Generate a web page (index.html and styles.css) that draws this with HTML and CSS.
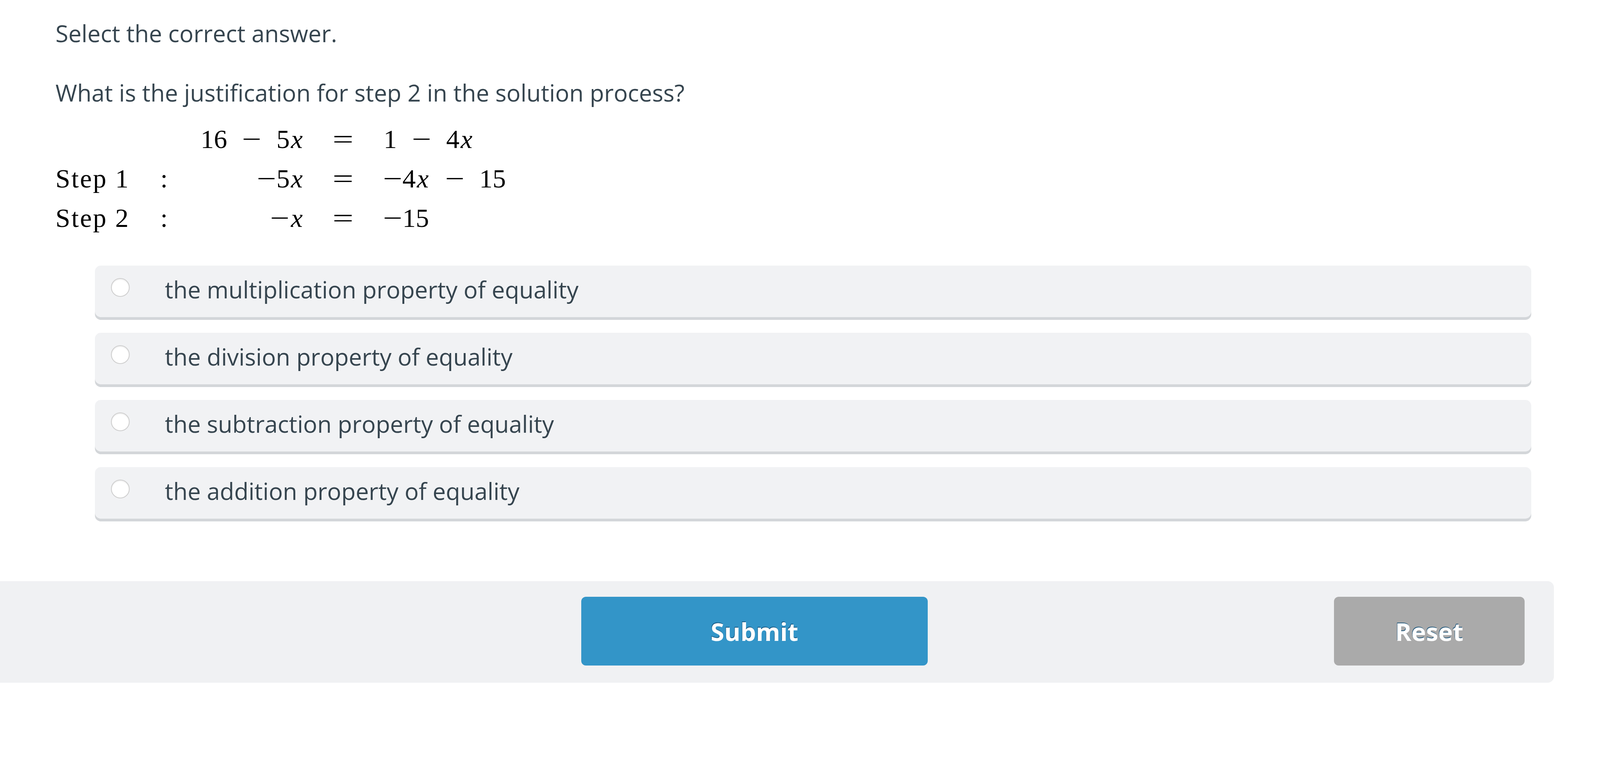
FILE: index.html
```html
<!DOCTYPE html>
<html lang="en">
<head>
<meta charset="utf-8">
<title>Select the correct answer</title>
<link rel="stylesheet" href="styles.css">
</head>
<body>
<main class="question">
  <p class="instr">Select the correct answer.</p>
  <p class="prompt">What is the justification for step 2 in the solution process?</p>
  <div class="math">
    <span class="lbl"></span><span class="col"></span>
    <span class="lhs">16<span class="bin">−</span>5<i class="v">x</i></span>
    <span class="eq"><span class="eqs">=</span></span>
    <span class="rhs">1<span class="bin">−</span>4<i class="v">x</i></span>

    <span class="lbl">Step 1</span><span class="col">:</span>
    <span class="lhs"><span class="neg">−</span>5<i class="v">x</i></span>
    <span class="eq"><span class="eqs">=</span></span>
    <span class="rhs"><span class="neg">−</span>4<i class="v">x</i><span class="bin">−</span>15</span>

    <span class="lbl">Step 2</span><span class="col">:</span>
    <span class="lhs"><span class="neg">−</span><i class="v">x</i></span>
    <span class="eq"><span class="eqs">=</span></span>
    <span class="rhs"><span class="neg">−</span>15</span>
  </div>
  <ul class="options">
    <li class="option"><input class="radio" type="radio" name="ans"><span class="label">the multiplication property of equality</span></li>
    <li class="option"><input class="radio" type="radio" name="ans"><span class="label">the division property of equality</span></li>
    <li class="option"><input class="radio" type="radio" name="ans"><span class="label">the subtraction property of equality</span></li>
    <li class="option"><input class="radio" type="radio" name="ans"><span class="label">the addition property of equality</span></li>
  </ul>
</main>
<div class="footer">
  <button class="btn submit" type="button">Submit</button>
  <button class="btn reset" type="button">Reset</button>
</div>
</body>
</html>
```
FILE: styles.css
```css
html, body {
  margin: 0;
  padding: 0;
  background: #ffffff;
}
body {
  font-family: "Open Sans", "Liberation Sans", sans-serif;
  color: #36454f;
  overflow: hidden;
}
.question {
  padding: 43px 0 0 142px;
}
.instr,
.prompt {
  margin: 0;
  font-size: 60px;
  line-height: 84px;
}
.prompt {
  margin-top: 68px;
}
.math {
  margin-top: 27px;
  display: grid;
  grid-template-columns: 250px 56px 330px 200px 400px;
  grid-auto-rows: 101px;
  line-height: 101px;
  font-family: "Liberation Serif", "Times New Roman", serif;
  font-size: 68px;
  color: #000;
  white-space: nowrap;
}
.lbl {
  letter-spacing: 3px;
}
.col {
  text-align: center;
}
.lhs {
  text-align: right;
}
.eq {
  text-align: center;
}
.eqs {
  display: inline-block;
  transform: scaleX(1.4);
}
.rhs {
  text-align: left;
  padding-left: 4px;
}
.bin {
  display: inline-block;
  margin: 0 44px;
  transform: scaleX(1.3);
}
.neg {
  display: inline-block;
  margin: 0 6px 0 4px;
  transform: scaleX(1.3);
}
.v {
  font-style: italic;
  padding: 0 3px;
}
.options {
  list-style: none;
  margin: 71px 0 0 101px;
  padding: 0;
  width: 3677px;
  display: flex;
  flex-direction: column;
  gap: 40px;
}
.option {
  display: flex;
  align-items: flex-start;
  height: 132px;
  box-sizing: border-box;
  padding: 19px 41px 0;
  background: #f1f2f4;
  border-radius: 15px;
  box-shadow: 0 7px 0 #d3d6d9;
  font-size: 60px;
  line-height: 84px;
}
.radio {
  appearance: none;
  -webkit-appearance: none;
  flex: none;
  width: 48px;
  height: 48px;
  margin: 13px 0 0 0;
  box-sizing: border-box;
  border-radius: 50%;
  border: 2px solid #cdcdcd;
  background: #ffffff;
  box-shadow: inset 0 2px 3px rgba(0, 0, 0, 0.07);
}
.label {
  margin-left: 90px;
}
.footer {
  display: flex;
  align-items: flex-start;
  width: 3978px;
  height: 260px;
  margin-top: 160px;
  padding: 40px 75px 0 0;
  box-sizing: border-box;
  background: #f0f1f3;
  border-radius: 0 16px 16px 0;
}
.btn {
  height: 176px;
  border: none;
  border-radius: 12px;
  color: #ffffff;
  font-family: "Open Sans", "Liberation Sans", sans-serif;
  font-weight: 700;
  font-size: 63px;
  padding: 0;
  text-shadow: -1px -2px 0 rgba(20, 80, 120, 0.85);
}
.submit {
  margin-left: 1488px;
  width: 887px;
  background: #3395c8;
}
.reset {
  margin-left: auto;
  width: 488px;
  background: #aaaaaa;
}
```
